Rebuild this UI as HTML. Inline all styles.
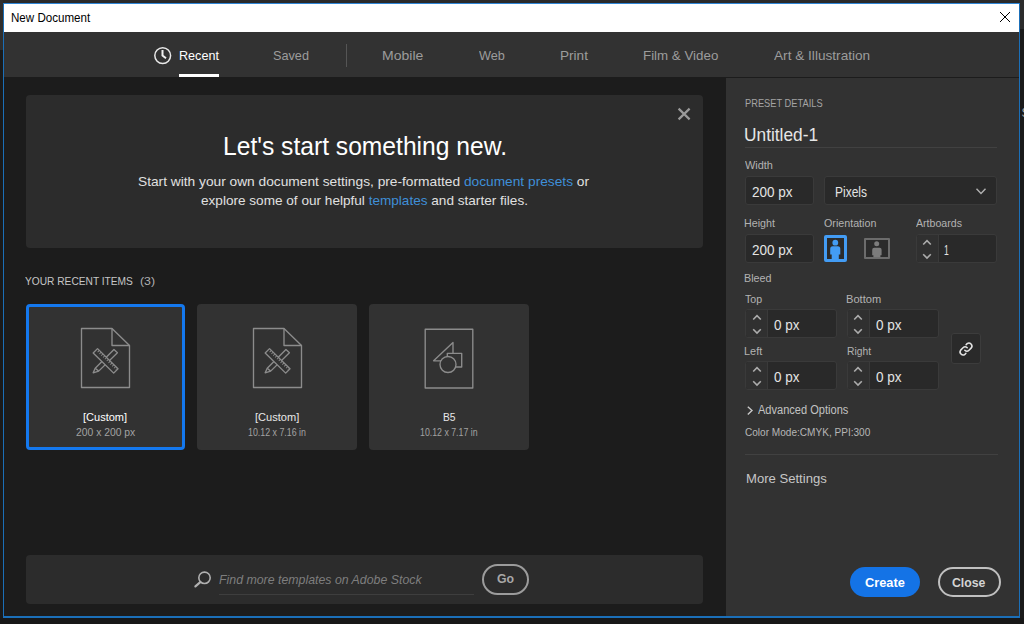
<!DOCTYPE html>
<html lang="en">
<head>
<meta charset="utf-8">
<title>New Document</title>
<style>
*{box-sizing:border-box;margin:0;padding:0}
html,body{width:1024px;height:624px;overflow:hidden;background:#1a1a1a;font-family:"Liberation Sans",sans-serif;}
body{position:relative}
.abs{position:absolute}
.t{position:absolute;white-space:nowrap;line-height:1;transform-origin:0 0;display:block}
.t a{color:#3f8fd8;text-decoration:none}
#o-top{left:0;top:0;width:1024px;height:3px;background:#2a2a2a}
#o-bot{left:0;top:618px;width:1024px;height:6px;background:#171717}
#o-left{left:0;top:0;width:3px;height:50px;background:#2e2e2e}
#o-right{left:1020px;top:0;width:4px;height:29px;background:#2b2b2b}
#win{left:3px;top:3px;width:1017px;height:615px;border:1px solid #1b6fb8;border-top-color:#2f86d6;border-bottom-width:2px;background:#1c1c1c}
#title{left:4px;top:4px;width:1015px;height:28px;background:#fff}
#tabs{left:4px;top:32px;width:1015px;height:45px;background:#323232}
#uline{left:179px;top:74px;width:39.5px;height:3px;background:#fff}
#sep{left:346px;top:44px;width:1px;height:23px;background:#555}
#hero{left:26px;top:95px;width:677px;height:153px;background:#2c2c2c;border-radius:4px}
.card{position:absolute;top:304px;width:160px;height:146px;background:#323232;border-radius:4px}
.card.sel{border:3px solid #1478ee;width:159px}
#search{left:26px;top:555px;width:677px;height:49px;background:#2c2c2c;border-radius:4px}
#sline{left:219px;top:594px;width:255px;height:1px;background:#3e3e3e}
#go{left:482px;top:564px;width:46.5px;height:31px;border:2px solid #9c9c9c;border-radius:16px}
#panel{left:726px;top:77px;width:293px;height:539px;background:#323232}
#pline{left:4px;top:77px;width:1015px;height:1px;background:#1c1c1c}
.inp{position:absolute;background:#292929;border:1px solid #3a3a3a;border-radius:3px;height:29px}
.inp .sp{position:absolute;left:0;top:0;width:22px;height:27px;border-right:1px solid #3a3a3a;background:#303030;border-radius:2px 0 0 2px}
.hl{position:absolute;height:1px;background:#414141}
#create{left:850px;top:567px;width:70px;height:30px;border-radius:15px;background:#1473e6}
#close{left:938px;top:567px;width:62.5px;height:30px;border-radius:15px;border:2px solid #c0c0c0}
svg{position:absolute;overflow:visible}
</style>
</head>
<body>
<div class="abs" id="o-top"></div>
<div class="abs" id="o-left"></div>
<div class="abs" id="o-bot"></div>
<div class="abs" id="o-right"></div>
<div class="abs" id="win"></div>
<div class="abs" id="title"></div>
<svg style="left:1000px;top:12px" width="10" height="10" viewBox="0 0 10 10"><path d="M0 0L10 10M10 0L0 10" stroke="#000" stroke-width="1" fill="none"/></svg>
<div class="abs" id="tabs"></div>
<svg style="left:153px;top:46px" width="19" height="19" viewBox="0 0 19 19"><circle cx="9.7" cy="9.6" r="7.9" fill="none" stroke="#e8e8e8" stroke-width="1.5"/><path d="M9.5 3.9V9.6L13 12.3" fill="none" stroke="#f0f0f0" stroke-width="2"/></svg>
<div class="abs" id="uline"></div>
<div class="abs" id="sep"></div>

<div class="abs" id="hero"></div>
<svg style="left:684px;top:114px" width="1" height="1" viewBox="0 0 1 1"><path d="M-5.4 -5.4L5.6 5.4M5.6 -5.4L-5.4 5.4" stroke="#9a9a9a" stroke-width="2.2" fill="none"/></svg>

<div class="card sel" style="left:26px"></div>
<div class="card" style="left:197px"></div>
<div class="card" style="left:369px"></div>

<!-- doc icons -->
<svg style="left:80px;top:327px" width="51" height="62" viewBox="0 0 51 62" fill="none" stroke="#8c8c8c" stroke-width="1.35" stroke-linejoin="round"><path d="M1.5 1.5H32L49.5 18.5V60.5H1.5Z"/><path d="M32 1.5V18.5H49.5"/><path d="M33.97 22.48L37.43 25.66L18.68 44.12L13.19 45.85L15.21 41.24Z"/><path d="M15.21 41.24L18.68 44.12"/><path d="M13.19 25.94L17.52 21.62L38 41.81L33.68 46.14Z" fill="#323232"/><path d="M17.3 23.1L36.6 42.1" stroke-width="2.4" stroke-dasharray="0.9 1.65" stroke-dashoffset="-1.2"/></svg>
<svg style="left:251.6px;top:327px" width="51" height="62" viewBox="0 0 51 62" fill="none" stroke="#8c8c8c" stroke-width="1.35" stroke-linejoin="round"><path d="M1.5 1.5H32L49.5 18.5V60.5H1.5Z"/><path d="M32 1.5V18.5H49.5"/><path d="M33.97 22.48L37.43 25.66L18.68 44.12L13.19 45.85L15.21 41.24Z"/><path d="M15.21 41.24L18.68 44.12"/><path d="M13.19 25.94L17.52 21.62L38 41.81L33.68 46.14Z" fill="#323232"/><path d="M17.3 23.1L36.6 42.1" stroke-width="2.4" stroke-dasharray="0.9 1.65" stroke-dashoffset="-1.2"/></svg>
<svg style="left:424px;top:328px" width="50" height="61" viewBox="0 0 50 61" fill="#323232" stroke="#8c8c8c" stroke-width="1.35" stroke-linejoin="round"><rect x="1.2" y="1.2" width="47.6" height="58.8" fill="none"/><path d="M9.6 32.8L29 14.5V32.8Z"/><rect x="23.3" y="25.3" width="14.4" height="13.7"/><circle cx="24" cy="36.5" r="8"/></svg>

<div class="abs" id="search"></div>
<svg style="left:194px;top:570px" width="18" height="18" viewBox="0 0 18 18" fill="none" stroke="#b0b0b0"><circle cx="10.5" cy="7.8" r="5.7" stroke-width="1.6"/><path d="M6.3 12.1L1.4 16.4" stroke-width="2.2" stroke-linecap="round"/></svg>
<div class="abs" id="sline"></div>
<div class="abs" id="go"></div>

<div class="abs" id="panel"></div>
<div class="abs" id="pline"></div>
<div class="hl" style="left:745px;top:147px;width:252px"></div>

<div class="inp" style="left:745px;top:176px;width:69px"></div>
<div class="inp" style="left:824px;top:176px;width:173px"></div>
<svg style="left:976px;top:188px" width="10" height="7" viewBox="0 0 10 7"><path d="M0.5 0.8L5 5.5L9.5 0.8" fill="none" stroke="#b0b0b0" stroke-width="1.4"/></svg>

<div class="inp" style="left:745px;top:234px;width:69px"></div>
<div class="abs" style="left:824px;top:235px;width:22.5px;height:27px;border:3px solid #439cf4;background:#2b2b2b;border-radius:2px"></div>
<svg style="left:824px;top:235px" width="23" height="27" viewBox="0 0 23 27" fill="#439cf4"><circle cx="11.3" cy="7.7" r="2.9"/><path d="M6.2 13.7Q6.2 11.2 8.7 11.2H13.8Q16.3 11.2 16.3 13.7V19.6H14.8V24.5H7.7V19.6H6.2Z"/></svg>
<div class="abs" style="left:864px;top:238px;width:26px;height:21px;border:2px solid #6c6c6c;background:#2b2b2b;border-radius:1px"></div>
<svg style="left:864px;top:238px" width="26" height="21" viewBox="0 0 26 21" fill="#7c7c7c"><circle cx="12.7" cy="5.8" r="2.5"/><path d="M8.2 11.7Q8.2 9.7 10.2 9.7H15.6Q17.6 9.7 17.6 11.7V17.3H16.4V19.3H9.4V17.3H8.2Z"/></svg>
<div class="inp" style="left:916px;top:234px;width:81px"><span class="sp"></span></div>
<svg class="ar" style="left:922px;top:239px" width="10" height="21" viewBox="0 0 10 21" fill="none" stroke="#acacac" stroke-width="1.6"><path d="M1.2 5.5L5 1.7L8.8 5.5M1.2 15.3L5 19.1L8.8 15.3"/></svg>

<div class="inp" style="left:745px;top:309px;width:92px"><span class="sp"></span></div>
<div class="inp" style="left:847px;top:309px;width:92px"><span class="sp"></span></div>
<div class="inp" style="left:745px;top:361px;width:92px"><span class="sp"></span></div>
<div class="inp" style="left:847px;top:361px;width:92px"><span class="sp"></span></div>
<svg style="left:752px;top:314px" width="10" height="21" viewBox="0 0 10 21" fill="none" stroke="#acacac" stroke-width="1.6"><path d="M1.2 5.5L5 1.7L8.8 5.5M1.2 15.3L5 19.1L8.8 15.3"/></svg>
<svg style="left:853px;top:314px" width="10" height="21" viewBox="0 0 10 21" fill="none" stroke="#acacac" stroke-width="1.6"><path d="M1.2 5.5L5 1.7L8.8 5.5M1.2 15.3L5 19.1L8.8 15.3"/></svg>
<svg style="left:752px;top:366px" width="10" height="21" viewBox="0 0 10 21" fill="none" stroke="#acacac" stroke-width="1.6"><path d="M1.2 5.5L5 1.7L8.8 5.5M1.2 15.3L5 19.1L8.8 15.3"/></svg>
<svg style="left:853px;top:366px" width="10" height="21" viewBox="0 0 10 21" fill="none" stroke="#acacac" stroke-width="1.6"><path d="M1.2 5.5L5 1.7L8.8 5.5M1.2 15.3L5 19.1L8.8 15.3"/></svg>

<div class="abs" style="left:951px;top:333px;width:30px;height:31px;border:1px solid #3c3c3c;border-radius:3px;background:#2a2a2a"></div>
<svg style="left:958px;top:341px" width="16" height="16" viewBox="0 0 16 16" fill="none" stroke="#e4e4e4" stroke-width="1.55" stroke-linecap="round"><path d="M6.8 9.2a3 3 0 0 0 4.2 0l2.3-2.3a3 3 0 0 0-4.2-4.2l-1 1"/><path d="M9.2 6.8a3 3 0 0 0-4.2 0l-2.3 2.3a3 3 0 0 0 4.2 4.2l1-1"/></svg>

<svg style="left:747px;top:406px" width="6" height="10" viewBox="0 0 6 10"><path d="M0.8 0.8L5 4.6L0.8 8.6" fill="none" stroke="#c8c8c8" stroke-width="1.4"/></svg>
<div class="hl" style="left:745px;top:454px;width:253px"></div>

<div class="abs" id="create"></div>
<div class="abs" id="close"></div>

<span class="t" style="left:1021.6px;top:107.4px;font-size:12.5px;color:#a8a8a8">S</span>
<span class="t" id="t_title" style="left:10.83px;top:11.84px;font-size:12px;color:#000;transform:scaleX(0.9654);">New Document</span>
<span class="t" id="t_recent" style="left:179.40px;top:49.00px;font-size:13px;color:#fff;transform:scaleX(0.9683);">Recent</span>
<span class="t" id="t_saved" style="left:273.27px;top:49.00px;font-size:13px;color:#9c9c9c;transform:scaleX(0.9753);">Saved</span>
<span class="t" id="t_mobile" style="left:382.23px;top:49.00px;font-size:13px;color:#9c9c9c;transform:scaleX(1.0783);">Mobile</span>
<span class="t" id="t_web" style="left:479.10px;top:49.00px;font-size:13px;color:#9c9c9c;transform:scaleX(0.9769);">Web</span>
<span class="t" id="t_print" style="left:560.28px;top:49.00px;font-size:13px;color:#9c9c9c;transform:scaleX(1.0453);">Print</span>
<span class="t" id="t_film" style="left:643.21px;top:49.00px;font-size:13px;color:#9c9c9c;transform:scaleX(1.0252);">Film &amp; Video</span>
<span class="t" id="t_art" style="left:773.62px;top:49.00px;font-size:13px;color:#9c9c9c;transform:scaleX(1.0485);">Art &amp; Illustration</span>
<span class="t" id="t_h1" style="left:222.83px;top:134.24px;font-size:25px;color:#fff;transform:scaleX(0.9852);">Let's start something new.</span>
<span class="t" id="t_p1" style="left:138.36px;top:174.97px;font-size:13.5px;color:#e0e0e0;transform:scaleX(1.0171);">Start with your own document settings, pre-formatted <a>document presets</a> or</span>
<span class="t" id="t_p2" style="left:201.00px;top:194.17px;font-size:13.5px;color:#e0e0e0;transform:scaleX(1.0062);">explore some of our helpful <a>templates</a> and starter files.</span>
<span class="t" id="t_yri" style="left:25.38px;top:275.69px;font-size:11px;color:#c6c6c6;transform:scaleX(0.9255);">YOUR RECENT ITEMS</span>
<span class="t" id="t_cnt" style="left:140.25px;top:275.69px;font-size:11px;color:#b0b0b0;transform:scaleX(1.1196);">(3)</span>
<span class="t" id="t_c1a" style="left:83.25px;top:411.71px;font-size:10.5px;color:#fff;transform:scaleX(1.0500);">[Custom]</span>
<span class="t" id="t_c1b" style="left:75.64px;top:427.11px;font-size:10.5px;color:#a2a2a2;transform:scaleX(0.9853);">200 x 200 px</span>
<span class="t" id="t_c2a" style="left:255.14px;top:411.71px;font-size:10.5px;color:#e8e8e8;transform:scaleX(1.0529);">[Custom]</span>
<span class="t" id="t_c2b" style="left:248.08px;top:427.11px;font-size:10.5px;color:#a2a2a2;transform:scaleX(0.8419);">10.12 x 7.16 in</span>
<span class="t" id="t_c3a" style="left:442.92px;top:411.71px;font-size:10.5px;color:#e8e8e8;transform:scaleX(0.9777);">B5</span>
<span class="t" id="t_c3b" style="left:420.16px;top:427.11px;font-size:10.5px;color:#a2a2a2;transform:scaleX(0.8358);">10.12 x 7.17 in</span>
<span class="t" id="t_find" style="left:219.37px;top:572.57px;font-size:13.5px;color:#7e7e7e;transform:scaleX(0.9142);font-style:italic;">Find more templates on Adobe Stock</span>
<span class="t" id="t_go" style="left:497.00px;top:573.42px;font-size:12.5px;color:#a8a8a8;transform:scaleX(0.9824);font-weight:bold;">Go</span>
<span class="t" id="t_preset" style="left:744.82px;top:97.61px;font-size:10.5px;color:#a4a4a4;transform:scaleX(0.8844);">PRESET DETAILS</span>
<span class="t" id="t_name" style="left:744.17px;top:124.72px;font-size:19px;color:#e6e6e6;transform:scaleX(0.9115);">Untitled-1</span>
<span class="t" id="t_width" style="left:745.08px;top:160.11px;font-size:10.5px;color:#b2b2b2;transform:scaleX(1.0413);">Width</span>
<span class="t" id="t_w200" style="left:752.13px;top:184.65px;font-size:14px;color:#e4e4e4;transform:scaleX(0.9659);">200 px</span>
<span class="t" id="t_pixels" style="left:834.84px;top:184.65px;font-size:14px;color:#e4e4e4;transform:scaleX(0.8556);">Pixels</span>
<span class="t" id="t_height" style="left:744.01px;top:218.11px;font-size:10.5px;color:#b2b2b2;transform:scaleX(1.0186);">Height</span>
<span class="t" id="t_orient" style="left:824.01px;top:218.11px;font-size:10.5px;color:#b2b2b2;transform:scaleX(1.0195);">Orientation</span>
<span class="t" id="t_artb" style="left:916.00px;top:218.11px;font-size:10.5px;color:#b2b2b2;transform:scaleX(1.0089);">Artboards</span>
<span class="t" id="t_h200" style="left:752.13px;top:242.65px;font-size:14px;color:#e4e4e4;transform:scaleX(0.9659);">200 px</span>
<span class="t" id="t_one" style="left:943.50px;top:242.65px;font-size:14px;color:#e4e4e4;transform:scaleX(0.6123);">1</span>
<span class="t" id="t_bleed" style="left:743.90px;top:272.91px;font-size:10.5px;color:#b2b2b2;transform:scaleX(1.0250);">Bleed</span>
<span class="t" id="t_top" style="left:745.05px;top:293.51px;font-size:10.5px;color:#b2b2b2;transform:scaleX(1.0104);">Top</span>
<span class="t" id="t_bottom" style="left:846.28px;top:293.51px;font-size:10.5px;color:#b2b2b2;transform:scaleX(1.0574);">Bottom</span>
<span class="t" id="t_b1" style="left:774.22px;top:318.15px;font-size:14px;color:#e4e4e4;transform:scaleX(0.9617);">0 px</span>
<span class="t" id="t_b2" style="left:875.78px;top:318.15px;font-size:14px;color:#e4e4e4;transform:scaleX(0.9686);">0 px</span>
<span class="t" id="t_left" style="left:744.49px;top:346.11px;font-size:10.5px;color:#b2b2b2;transform:scaleX(1.0401);">Left</span>
<span class="t" id="t_right" style="left:846.52px;top:346.11px;font-size:10.5px;color:#b2b2b2;transform:scaleX(0.9792);">Right</span>
<span class="t" id="t_b3" style="left:774.22px;top:370.15px;font-size:14px;color:#e4e4e4;transform:scaleX(0.9617);">0 px</span>
<span class="t" id="t_b4" style="left:875.78px;top:370.15px;font-size:14px;color:#e4e4e4;transform:scaleX(0.9686);">0 px</span>
<span class="t" id="t_adv" style="left:757.95px;top:403.64px;font-size:12px;color:#c2c2c2;transform:scaleX(0.9208);">Advanced Options</span>
<span class="t" id="t_cm" style="left:744.98px;top:426.69px;font-size:11px;color:#b6b6b6;transform:scaleX(0.9150);">Color Mode:CMYK, PPI:300</span>
<span class="t" id="t_more" style="left:745.89px;top:471.50px;font-size:13px;color:#c6c6c6;transform:scaleX(1.0066);">More Settings</span>
<span class="t" id="t_create" style="left:864.78px;top:576.87px;font-size:12.2px;color:#fff;transform:scaleX(1.0479);font-weight:bold;">Create</span>
<span class="t" id="t_close" style="left:951.83px;top:576.87px;font-size:12.2px;color:#d4d4d4;transform:scaleX(1.0070);font-weight:bold;">Close</span>
</body>
</html>
